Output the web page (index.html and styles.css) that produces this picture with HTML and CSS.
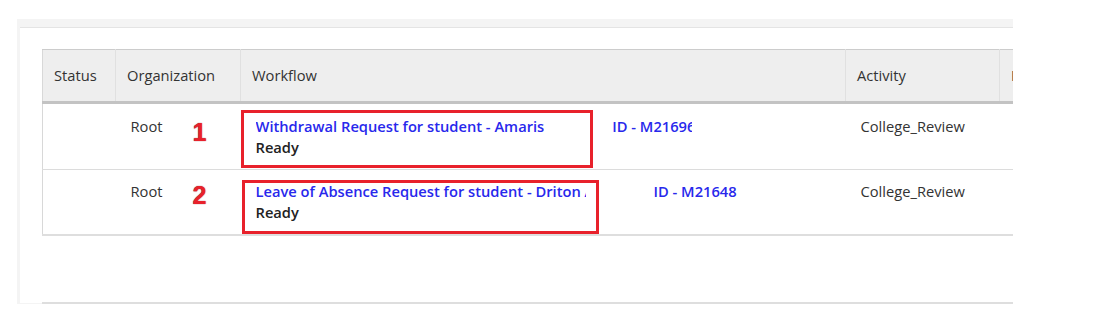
FILE: index.html
```html
<!DOCTYPE html>
<html lang="en">
<head>
<meta charset="utf-8">
<title>Worklist</title>
<link rel="stylesheet" href="styles.css">
</head>
<body>
<div class="page">
  <div class="panel">
    <div class="card">
      <div class="grid-wrap">
        <table class="grid">
          <colgroup>
            <col class="c-status">
            <col class="c-org">
            <col class="c-wf">
            <col class="c-act">
            <col class="c-more">
          </colgroup>
          <thead>
            <tr>
              <th>Status</th>
              <th>Organization</th>
              <th>Workflow</th>
              <th>Activity</th>
              <th>Priority</th>
            </tr>
          </thead>
          <tbody>
            <tr>
              <td></td>
              <td class="org">Root<span class="mark mark-1">1</span></td>
              <td class="wf">
                <div class="wf-line">
                  <a class="wf-title" href="#">Withdrawal Request for student - Amaris</a>
                  <a class="wf-id wf-id--cut" href="#">ID - M21696</a>
                </div>
                <div class="wf-state">Ready</div>
                <span class="callout callout-1"></span>
              </td>
              <td class="act">College_Review</td>
              <td></td>
            </tr>
            <tr>
              <td></td>
              <td class="org">Root<span class="mark mark-2">2</span></td>
              <td class="wf">
                <div class="wf-line">
                  <a class="wf-title" href="#">Leave of Absence Request for student - Driton Amaris</a>
                  <a class="wf-id" href="#">ID - M21648</a>
                </div>
                <div class="wf-state">Ready</div>
                <span class="callout callout-2"></span>
              </td>
              <td class="act">College_Review</td>
              <td></td>
            </tr>
          </tbody>
        </table>
      </div>
    </div>
  </div>
</div>
</body>
</html>
```

FILE: styles.css
```css
html, body {
  margin: 0;
  padding: 0;
  background: #ffffff;
}

body {
  font-family: "Open Sans", "Noto Sans", sans-serif;
  font-size: 14.7px;
  color: #333333;
}

.page {
  padding: 19px 0 0 17px;
  width: 996px;
  overflow: hidden;
}

.panel {
  background: #f4f4f4;
  padding: 8px 0 0 3px;
  height: 277px;
}

.card {
  background: #ffffff;
  border-top: 1px solid #e4e4e4;
  height: 276px;
  padding: 21px 0 0 22px;
  box-sizing: border-box;
}

.grid-wrap {
  width: 1100px;
  height: 253px;
  border-bottom: 2px solid #dedede;
}

.grid {
  border-collapse: collapse;
  table-layout: fixed;
  width: 1100px;
  border-left: 1px solid #d8d8d8;
}

.c-status { width: 73px; }
.c-org { width: 125px; }
.c-wf { width: 605px; }
.c-act { width: 154px; }
.c-more { width: 143px; }

.grid th {
  background: #eeeeee;
  height: 49px;
  padding: 0 0 2px 11px;
  text-align: left;
  font-weight: 400;
  color: #333333;
  border-top: 1px solid #cccccc;
  border-right: 1px solid #e0e0e0;
  border-bottom: 3px solid #c3c3c3;
}

.grid td {
  height: 53px;
  padding: 0 0 0 15px;
  vertical-align: top;
  border-bottom: 1px solid #dcdcdc;
}

.grid tbody tr:last-child td {
  border-bottom: 2px solid #dedede;
}

.grid td:first-child {
  padding: 0;
}

.grid td.org,
.grid td.act,
.grid td.wf {
  padding-top: 12px;
  line-height: 20px;
}

.grid td.org,
.grid td.wf {
  position: relative;
}

.grid tr:last-child td.org,
.grid tr:last-child td.act,
.grid tr:last-child td.wf {
  padding-top: 11px;
}

.wf-line {
  display: flex;
  align-items: center;
  white-space: nowrap;
  height: 20px;
}

.wf-title,
.wf-id {
  display: block;
  color: #2828ec;
  font-weight: 600;
  text-decoration: none;
  overflow: hidden;
  white-space: nowrap;
  line-height: 20px;
}

.wf-title {
  max-width: 330px;
}

.wf-id {
  margin-left: 68px;
  max-width: 86px;
}

.wf-id--cut {
  max-width: 80px;
}

.wf-state {
  font-weight: 600;
  color: #222222;
  line-height: 22px;
}

/* red annotation frames and row numbers drawn over the table */
.callout {
  position: absolute;
  border: 3px solid #e8212b;
  box-sizing: border-box;
  pointer-events: none;
}

.callout-1 {
  left: 0;
  top: 6px;
  width: 352px;
  height: 58px;
}

.callout-2 {
  left: 1px;
  top: 10px;
  width: 357px;
  height: 54px;
}

.mark {
  position: absolute;
  font-family: "Liberation Sans", Arial, sans-serif;
  font-weight: 700;
  font-size: 25px;
  line-height: 1;
  color: #e8212b;
  text-shadow: 0 0 1px #7a1015;
}

.mark-1 {
  left: 77px;
  top: 16px;
}

.mark-2 {
  left: 77px;
  top: 13px;
}
```
